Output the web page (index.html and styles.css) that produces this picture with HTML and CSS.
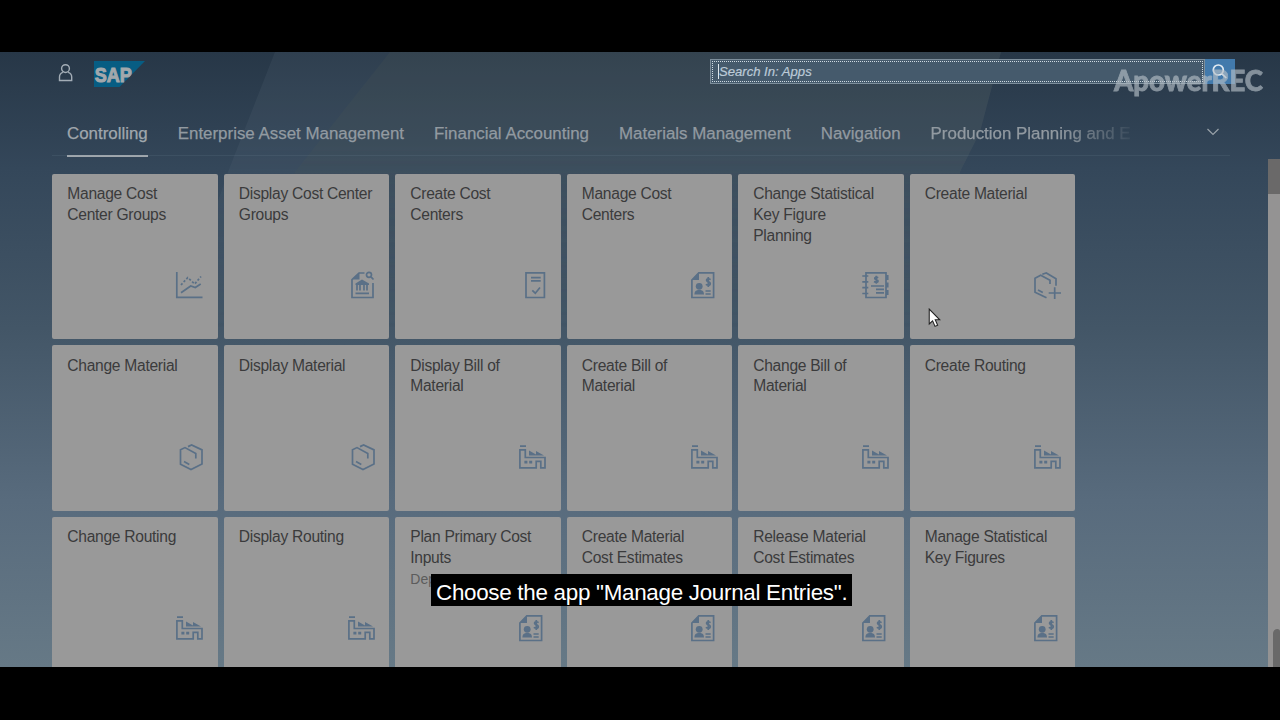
FILE: index.html
```html
<!DOCTYPE html>
<html lang="en">
<head>
  <meta charset="UTF-8">
  <title>Home</title>
  <link rel="stylesheet" href="styles.css">
</head>
<body>
  <!-- icon set -->
  <svg class="defs" width="28" height="28">
    <symbol id="chart" viewBox="0 0 28 28">
      <path d="M.8 0V25.3H26.5M5 20.7L14.7 14L19.3 15.5L24.7 12"/>
      <path stroke-dasharray="2.2 1.8" d="M5 13L11.7 5.6L18.7 12L25 4.5"/>
    </symbol>
    <symbol id="bank" viewBox="0 0 28 28">
      <path d="M16.5 1H11L4 7.5V25.5H25V11"/>
      <path class="fill" d="M11.5 .5V7.5H4Z M14 7.5L21 11.5V13H7.5V11.5Z"/>
      <path d="M9 13V18.5M12 13V18.5M16 13V18.5M19 13V18.5M7.5 21.3H21"/>
      <circle cx="21" cy="2.8" r="2.5"/>
      <path d="M23 4.8L25.5 7.5"/>
    </symbol>
    <symbol id="check" viewBox="0 0 28 28">
      <path d="M7 .9H25.4V25.5H7ZM12 5.7H21.7M12 8.9H21.7M13.3 18.4L16.3 21.2L21 15.5"/>
    </symbol>
    <symbol id="card" viewBox="0 0 28 28">
      <path d="M7.8 .9H22.6V25.5H.9V8Z"/>
      <path class="fill" d="M8 .5V8H.5Z"/>
      <circle class="fill" cx="8.2" cy="14.3" r="3.4"/>
      <path class="fill" d="M3.4 22.6Q3.4 18.3 7 18H9.5Q13 18.3 13 22.6Z"/>
      <path d="M14.5 19H19.7M14.5 22H19.7"/>
      <path d="M19.6 7.6Q17.2 6 15.8 7.4Q15 9.2 17.3 9.9Q20 10.7 19 12.6Q17.4 14 14.8 12.4M17.3 5V15"/>
    </symbol>
    <symbol id="ledger" viewBox="0 0 28 28">
      <path d="M4 .9H24V25.5H4ZM.3 4H6.3M.3 9.8H6.3M.3 15.7H6.3M.3 21.5H6.3M9 14H22M14 17.4H22M14 20.8H22M25.7 3V8M25.7 10.5V15.5M25.7 18V23"/>
      <path d="M16.2 5.8Q14.2 4.6 12.9 5.8Q12.4 7.2 14.3 7.7Q16.6 8.3 15.8 9.8Q14.4 11 12 9.6M14.3 3.8V11.7"/>
    </symbol>
    <symbol id="hexplus" viewBox="0 0 28 28">
      <path d="M12.5 25.8L1 20.2V6.3L6.7 3.3L16 8.3V12M8.3 2.2L12.3 .9L22 6.7V13.7M4 18L8.8 20.5M20.7 15.2V27M14.7 21H27"/>
    </symbol>
    <symbol id="hex" viewBox="0 0 28 28">
      <path d="M12 2.6L15.6 1L26 5.9V20L15 25.6L4.5 20.3V5.7L9 3.6L19.8 9.5V14.6M8 17.6L13.3 20.4"/>
    </symbol>
    <symbol id="factory" viewBox="0 0 28 28">
      <path d="M1 2.2H7M.9 5.9H6.3V13.5H26V23.9H21.8V17.3H17.2V23.9H.9Z"/>
      <path class="fill" d="M10 6.5L17 10.5V7L25 11.5H10Z M5.4 16.8H8.4V19.6H5.4Z M10.2 16.8H13.2V19.6H10.2Z"/>
    </symbol>
  </svg>

  <div class="screen">
    <header class="shell">
      <svg class="user" width="16" height="20" viewBox="0 0 16 20">
        <circle cx="7.5" cy="5.6" r="3.9"/>
        <path d="M4.9 9.4Q1.5 10.4 1.5 14V17.5H13.7V14Q13.7 10.4 10.1 9.4"/>
      </svg>
      <svg class="logo" width="51" height="26" viewBox="0 0 51 26">
        <path d="M0 0H51L25.5 26H0Z"/>
        <text x="0.8" y="20.6" textLength="37" lengthAdjust="spacingAndGlyphs">SAP</text>
      </svg>
      <div class="search">
        <div class="field"><span class="caret"></span>Search In: Apps</div>
        <div class="go">
          <svg width="30" height="25" viewBox="0 0 30 25"><circle cx="13.3" cy="11" r="5"/><path d="M17 14.8L21.3 19"/></svg>
        </div>
      </div>
    </header>

    <nav class="tabs">
      <span class="tab active">Controlling</span>
      <span class="tab">Enterprise Asset Management</span>
      <span class="tab">Financial Accounting</span>
      <span class="tab">Materials Management</span>
      <span class="tab">Navigation</span>
      <span class="tab last">Production Planning and E</span>
      <svg class="more" width="14" height="10" viewBox="0 0 14 10"><path d="M1.5 2L7 7.5L12.5 2"/></svg>
    </nav>

    <main class="content">
      <div class="tiles">
        <div class="tile"><h3>Manage Cost<br>Center Groups</h3><svg class="icon"><use href="#chart"/></svg></div>
        <div class="tile"><h3>Display Cost Center<br>Groups</h3><svg class="icon"><use href="#bank"/></svg></div>
        <div class="tile"><h3>Create Cost<br>Centers</h3><svg class="icon"><use href="#check"/></svg></div>
        <div class="tile"><h3>Manage Cost<br>Centers</h3><svg class="icon"><use href="#card"/></svg></div>
        <div class="tile"><h3>Change Statistical<br>Key Figure<br>Planning</h3><svg class="icon"><use href="#ledger"/></svg></div>
        <div class="tile"><h3>Create Material</h3><svg class="icon"><use href="#hexplus"/></svg></div>

        <div class="tile"><h3>Change Material</h3><svg class="icon"><use href="#hex"/></svg></div>
        <div class="tile"><h3>Display Material</h3><svg class="icon"><use href="#hex"/></svg></div>
        <div class="tile"><h3>Display Bill of<br>Material</h3><svg class="icon"><use href="#factory"/></svg></div>
        <div class="tile"><h3>Create Bill of<br>Material</h3><svg class="icon"><use href="#factory"/></svg></div>
        <div class="tile"><h3>Change Bill of<br>Material</h3><svg class="icon"><use href="#factory"/></svg></div>
        <div class="tile"><h3>Create Routing</h3><svg class="icon"><use href="#factory"/></svg></div>

        <div class="tile"><h3>Change Routing</h3><svg class="icon"><use href="#factory"/></svg></div>
        <div class="tile"><h3>Display Routing</h3><svg class="icon"><use href="#factory"/></svg></div>
        <div class="tile"><h3>Plan Primary Cost<br>Inputs</h3><p>Dep</p><svg class="icon"><use href="#card"/></svg></div>
        <div class="tile"><h3>Create Material<br>Cost Estimates</h3><svg class="icon"><use href="#card"/></svg></div>
        <div class="tile"><h3>Release Material<br>Cost Estimates</h3><svg class="icon"><use href="#card"/></svg></div>
        <div class="tile"><h3>Manage Statistical<br>Key Figures</h3><svg class="icon"><use href="#card"/></svg></div>
      </div>
      <div class="scrollbar">
        <div class="thumb"></div>
        <div class="thumb-end"></div>
      </div>
    </main>

    <div class="watermark">ApowerREC</div>
    <div class="caption">Choose the app "Manage Journal Entries".</div>
    <svg class="cursor" width="13" height="20" viewBox="0 0 12 19">
      <path d="M1 1V15.2L4.2 12.2L6.5 17.5L9 16.4L6.7 11.2H11Z"/>
    </svg>
  </div>
</body>
</html>
```
FILE: styles.css
```css
body {
  margin: 0;
  height: 720px;
  overflow: hidden;
  background: #000;
  font-family: "Liberation Sans", Arial, sans-serif;
}

.defs {
  position: absolute;
}

.screen {
  position: relative;
  display: flex;
  flex-direction: column;
  height: 615px;
  margin-top: 52px;
  overflow: hidden;
  background: linear-gradient(#273747, #34475a 19%, #435667 45%, #586b7d 73%, #667986);
}

/* faint facets of the wallpaper */
.screen::before,
.screen::after {
  content: "";
  position: absolute;
  inset: 0;
  background: rgba(105, 125, 140, 0.13);
  clip-path: polygon(275px 0, 1001px 0, 980px 80px, 960px 120px, 960px 320px, 160px 320px, 228px 120px);
  -webkit-mask-image: linear-gradient(#000 15%, transparent 45%);
}

.screen::after {
  background: rgba(80, 90, 85, 0.18);
  clip-path: polygon(390px 0, 1001px 0, 980px 80px, 960px 120px, 960px 320px, 190px 320px, 295px 120px);
}

.shell,
.tabs,
.content {
  position: relative;
  z-index: 1;
}

/* header */
.shell {
  display: flex;
  align-items: flex-start;
  box-sizing: border-box;
  height: 55px;
  padding: 7px 45px 0 58px;
}

.user {
  margin-top: 4px;
  fill: none;
  stroke: #a3adb6;
  stroke-width: 1.4;
}

.logo {
  margin: 2px 0 0 20px;
  fill: #075d83;
}

.logo text {
  fill: #a2a8ac;
  stroke: #a2a8ac;
  stroke-width: 1.1;
  font-size: 21px;
  font-weight: bold;
}

.search {
  display: flex;
  width: 525px;
  height: 25px;
  margin-left: auto;
}

.field {
  flex: 1;
  display: flex;
  align-items: center;
  box-sizing: border-box;
  padding-left: 7px;
  border: 1px solid #7d8e9b;
  outline: 1px dotted #cfdae2;
  outline-offset: -3px;
  background: #455a6c;
  color: #bccbd8;
  font-size: 13.1px;
  font-style: italic;
  -webkit-text-stroke: 0.2px #bccbd8;
}

.caret {
  width: 1px;
  height: 15px;
  background: #dde6ec;
}

.go {
  width: 30px;
  background: #427aac;
}

.go svg {
  display: block;
  fill: none;
  stroke: #e2ebf2;
  stroke-width: 1.7;
}

/* group tabs */
.tabs {
  display: flex;
  gap: 30px;
  box-sizing: border-box;
  height: 50px;
  margin-left: 52px;
  padding-left: 15px;
  width: 1178px;
  color: #929aa1;
  font-size: 16.9px;
  line-height: 53px;
  white-space: nowrap;
  -webkit-text-stroke: 0.25px currentColor;
}

.tabs::after {
  content: "";
  position: absolute;
  left: 0;
  right: 0;
  bottom: 1px;
  height: 1px;
  background: rgba(130, 150, 160, 0.14);
}

.active {
  box-sizing: border-box;
  height: 50px;
  border-bottom: 2px solid #a0a7ad;
  color: #a0a7ad;
}

.last {
  -webkit-mask-image: linear-gradient(90deg, #000 65%, rgba(0, 0, 0, 0.1));
}

.more {
  margin: 20px 10.5px 0 auto;
  fill: none;
  stroke: #99a2a9;
  stroke-width: 1.2;
}

/* tiles */
.content {
  display: flex;
  justify-content: space-between;
  flex: 1;
  min-height: 0;
  margin-top: 2px;
}

.tiles {
  display: grid;
  grid-template-columns: repeat(6, 165.3px);
  grid-auto-rows: 165.3px;
  gap: 6.2px;
  padding: 15px 0 0 52.3px;
}

.tile {
  position: relative;
  box-sizing: border-box;
  padding: 10.4px 0 0 15px;
  border-radius: 2px;
  background: #999;
  color: #3b3b3c;
  white-space: nowrap;
}

.tile h3 {
  margin: 0;
  font-size: 15.6px;
  font-weight: normal;
  line-height: 20.6px;
  letter-spacing: -0.28px;
}

.tile p {
  margin: 0;
  color: #5c5c5c;
  font-size: 14px;
  line-height: 20px;
}

.icon {
  position: absolute;
  right: 13.5px;
  bottom: 39px;
  width: 28px;
  height: 28px;
  overflow: visible;
  fill: none;
  stroke: #5a7087;
  stroke-width: 1.7;
}

symbol {
  overflow: visible;
}

.fill {
  fill: #5a7087;
  stroke: none;
}

.scrollbar {
  display: flex;
  flex-direction: column;
  justify-content: space-between;
  align-items: flex-end;
  width: 12px;
  background: #949393;
}

.thumb {
  width: 12px;
  height: 35px;
  background: #6a6969;
}

.thumb-end {
  width: 7px;
  height: 38px;
  border-radius: 5px 3px 0 0;
  background: #696969;
}

/* recorder overlays */
.watermark {
  position: absolute;
  z-index: 2;
  left: 1114px;
  top: 11px;
  color: #b4bec6;
  opacity: 0.65;
  font-family: Lato, sans-serif;
  font-size: 27.5px;
  font-weight: 900;
  line-height: 36px;
  -webkit-text-stroke: 0.8px #b4bec6;
}

.caption {
  position: absolute;
  z-index: 2;
  left: 431px;
  top: 522px;
  box-sizing: border-box;
  width: 421px;
  height: 32px;
  padding-left: 5px;
  background: #000;
  color: #fff;
  font-size: 22.4px;
  letter-spacing: -0.29px;
  line-height: 38px;
  white-space: nowrap;
}

.cursor {
  position: absolute;
  z-index: 2;
  left: 928px;
  top: 256px;
  fill: #fff;
  stroke: #222;
  stroke-width: 1;
}
```
